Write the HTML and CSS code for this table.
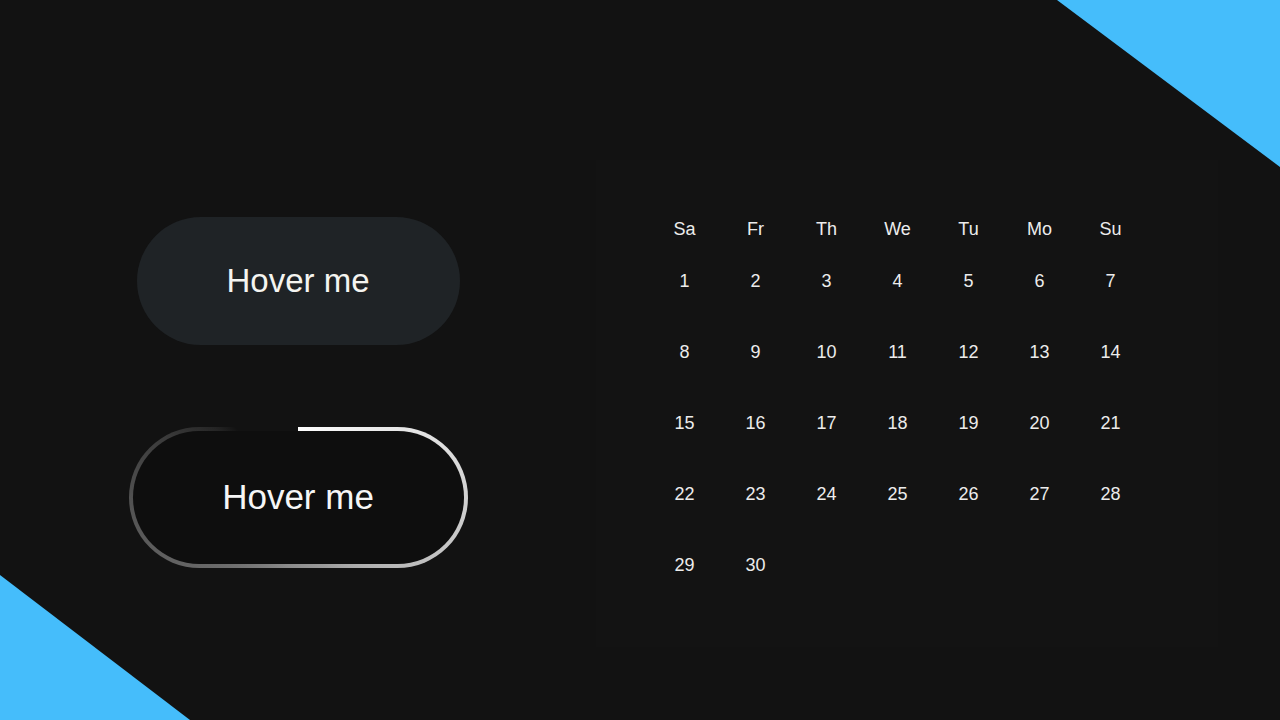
FILE: index.html
```html
<!DOCTYPE html>
<html lang="en">
<head>
<meta charset="utf-8">
<title>Buttons and calendar</title>
<link rel="stylesheet" href="styles.css">
</head>
<body>
<div class="corner corner-tr"></div>
<div class="corner corner-bl"></div>
<main class="page">
  <section class="buttons">
    <button class="btn-fill">Hover me</button>
    <div class="btn-ring">
      <button class="btn-outline">Hover me</button>
    </div>
  </section>
  <section class="calendar-panel">
    <div class="calendar">
      <div class="day-name">Sa</div>
      <div class="day-name">Fr</div>
      <div class="day-name">Th</div>
      <div class="day-name">We</div>
      <div class="day-name">Tu</div>
      <div class="day-name">Mo</div>
      <div class="day-name">Su</div>
      <div class="day">1</div><div class="day">2</div><div class="day">3</div><div class="day">4</div><div class="day">5</div><div class="day">6</div><div class="day">7</div>
      <div class="day">8</div><div class="day">9</div><div class="day">10</div><div class="day">11</div><div class="day">12</div><div class="day">13</div><div class="day">14</div>
      <div class="day">15</div><div class="day">16</div><div class="day">17</div><div class="day">18</div><div class="day">19</div><div class="day">20</div><div class="day">21</div>
      <div class="day">22</div><div class="day">23</div><div class="day">24</div><div class="day">25</div><div class="day">26</div><div class="day">27</div><div class="day">28</div>
      <div class="day">29</div><div class="day">30</div>
    </div>
  </section>
</main>
</body>
</html>
```
FILE: styles.css
```css
* { box-sizing: border-box; }

html, body {
  margin: 0;
  padding: 0;
  width: 1280px;
  height: 720px;
  overflow: hidden;
  background: #121212;
  font-family: "Liberation Sans", Arial, sans-serif;
}

body { position: relative; }

.corner {
  position: absolute;
  background: #45bdfb;
  z-index: 2;
}

.corner-tr {
  top: 0;
  right: 0;
  width: 223px;
  height: 167px;
  clip-path: polygon(0 0, 100% 0, 100% 100%);
}

.corner-bl {
  left: 0;
  bottom: 0;
  width: 190px;
  height: 145px;
  clip-path: polygon(0 0, 0 100%, 100% 100%);
}

.page {
  display: flex;
  height: 720px;
}

.buttons {
  width: 596px;
  padding-top: 217px;
  display: flex;
  flex-direction: column;
  align-items: center;
  gap: 82px;
}

.btn-fill {
  width: 323px;
  height: 128px;
  border: none;
  border-radius: 64px;
  background: #1f2326;
  color: #f4f4f0;
  font-family: inherit;
  font-size: 33px;
  padding: 0;
}

.btn-ring {
  width: 339px;
  height: 141px;
  padding: 4px;
  border-radius: 71px;
  background: conic-gradient(from 0deg at 50% 50%,
    #ffffff 0deg,
    #f0f0f0 40deg,
    #d8d8d8 80deg,
    #bdbdbd 120deg,
    #9a9a9a 160deg,
    #8a8a8a 190deg,
    #6a6a6a 230deg,
    #505050 270deg,
    #3a3a3a 295deg,
    #242424 310deg,
    rgba(18,18,18,0) 318deg,
    rgba(18,18,18,0) 360deg);
}

.btn-outline {
  width: 100%;
  height: 100%;
  border: none;
  border-radius: 67px;
  background: #0e0e0e;
  color: #f6f6f6;
  font-family: inherit;
  font-size: 35px;
  padding: 0 0 2px;
}

.calendar-panel {
  margin-top: 160px;
  width: 622px;
  height: 487px;
  padding: 54px 0 0 53px;
  background: #131313;
}

.calendar {
  display: grid;
  grid-template-columns: repeat(7, 71px);
  grid-template-rows: 31px repeat(5, 71px);
  color: #ececec;
  font-size: 18px;
}

.day-name, .day {
  display: flex;
  align-items: center;
  justify-content: center;
}

.day { padding-top: 2px; }
```
